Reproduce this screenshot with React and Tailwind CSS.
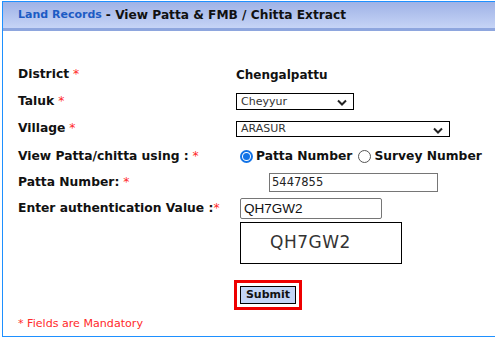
import React from 'react';

const font = { fontFamily: '"DejaVu Sans", Verdana, sans-serif' };

function Label({ children }) {
  return (
    <div className="w-[218px] shrink-0 text-[12.3px] font-bold text-[#111]">{children}</div>
  );
}

function Star() {
  return <span className="text-[#ff2a2a] font-normal"> *</span>;
}

function Chevron() {
  return (
    <svg width="10" height="7" viewBox="0 0 10 7" className="absolute right-[6px] top-[5px]">
      <path d="M1 1.5 L5 5.5 L9 1.5" fill="none" stroke="#222" strokeWidth="2" />
    </svg>
  );
}

export default function App() {
  return (
    <div className="w-[495px] h-[342px] bg-white pt-[1px] pl-[2px]" style={font}>
      <div className="w-[493px] h-[336px] border border-[#1e90ff] border-r-0 flex flex-col">
        {/* Header */}
        <div className="h-[26px] bg-gradient-to-b from-[#9fb2e6] to-[#c6d4f6] flex items-center pl-[15px]">
          <span className="text-[11px] font-bold text-[#1c5bc4]">Land Records</span>
          <span className="text-[12.2px] font-bold text-[#111] ml-[4px]">- View Patta &amp; FMB / Chitta Extract</span>
        </div>
        <div className="h-[3px] bg-[#8ea6de]" />

        {/* Form */}
        <div className="flex flex-col pl-[15px] pt-[30px]">
          <div className="flex items-center h-[27px]">
            <Label>District<Star /></Label>
            <div className="text-[12px] font-bold text-[#111]">Chengalpattu</div>
          </div>
          <div className="flex items-center h-[27px]">
            <Label>Taluk<Star /></Label>
            <div className="relative w-[118px] h-[17px] border border-black text-[11px] text-[#333] pl-[4px] leading-[15px]">
              Cheyyur
              <Chevron />
            </div>
          </div>
          <div className="flex items-center h-[27px]">
            <Label>Village<Star /></Label>
            <div className="relative w-[214px] h-[16px] border border-black text-[11px] text-[#333] pl-[4px] leading-[14px]">
              ARASUR
              <Chevron />
            </div>
          </div>
          <div className="flex items-center h-[28px]">
            <Label>View Patta/chitta using :<Star /></Label>
            <div className="flex items-center text-[12.3px] font-bold text-[#111] pl-[4px]">
              <span className="w-[13px] h-[13px] rounded-full border-2 border-[#1273e6] flex items-center justify-center">
                <span className="w-[7px] h-[7px] rounded-full bg-[#1273e6]" />
              </span>
              <span className="ml-[3px]">Patta Number</span>
              <span className="w-[13px] h-[13px] rounded-full border border-[#555] ml-[6px]" />
              <span className="ml-[3px]">Survey Number</span>
            </div>
          </div>
          <div className="flex items-center h-[25px]">
            <Label>Patta Number:<Star /></Label>
            <div className="ml-[33px] w-[169px] h-[19px] border border-[#767676] text-[11.5px] text-[#222] pl-[2px] leading-[17px]">
              5447855
            </div>
          </div>
          <div className="flex items-start pt-[3px]">
            <Label>
              <div className="pt-[1px]">
                Enter authentication Value :<span className="text-[#ff2a2a] font-normal">*</span>
              </div>
            </Label>
            <div className="flex flex-col ml-[4px]">
              <div className="w-[142px] h-[21px] border border-[#767676] rounded-[2px] text-[13.5px] text-[#111] pl-[3px] leading-[19px]" style={{ fontFamily: '"Liberation Sans", Arial, sans-serif' }}>
                QH7GW2
              </div>
              <div className="mt-[3px] w-[162px] h-[42px] border border-black flex items-center pl-[29px]">
                <span className="text-[17px] text-[#333] tracking-[0.5px]">QH7GW2</span>
              </div>
            </div>
          </div>
          <div className="flex mt-[16px]">
            <div className="w-[216px] shrink-0" />
            <div className="border-[3px] border-[#ee0000] p-[3px] w-[68px] h-[30px]">
              <div className="h-[18px] w-[56px] bg-[#c3d5f6] border border-black text-[11px] font-bold text-[#111] flex items-center justify-center">
                Submit
              </div>
            </div>
          </div>
          <div className="mt-[6px] text-[11.1px] text-[#ff2a2a]">* Fields are Mandatory</div>
        </div>
      </div>
    </div>
  );
}
